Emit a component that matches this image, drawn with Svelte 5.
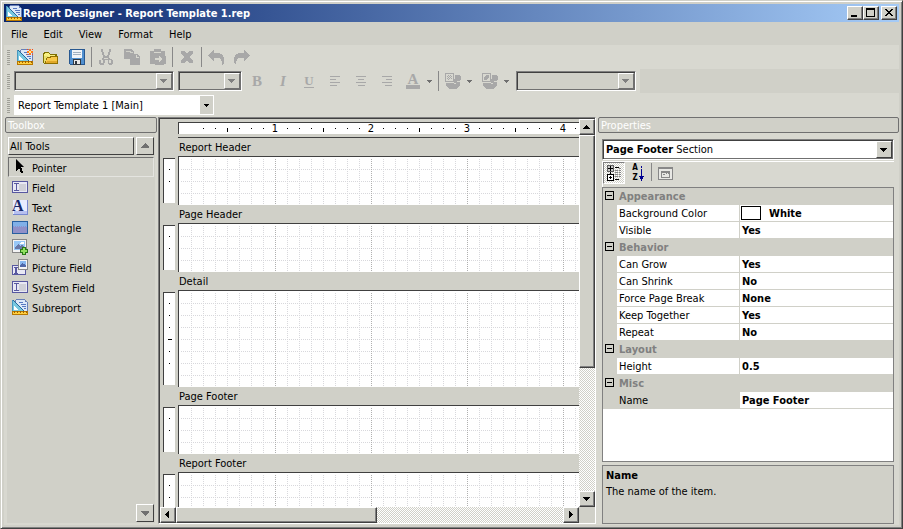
<script>
  const menus = ['File', 'Edit', 'View', 'Format', 'Help'];

  const mainTools = [
    { name: 'new', label: 'New' },
    { name: 'open', label: 'Open' },
    { name: 'save', label: 'Save' },
    null,
    { name: 'cut', label: 'Cut', disabled: true },
    { name: 'copy', label: 'Copy', disabled: true },
    { name: 'paste', label: 'Paste', disabled: true },
    null,
    { name: 'delete', label: 'Delete', disabled: true },
    null,
    { name: 'undo', label: 'Undo', disabled: true },
    { name: 'redo', label: 'Redo', disabled: true },
  ];

  const formatTools = [
    { name: 'bold', label: 'Bold' },
    { name: 'italic', label: 'Italic' },
    { name: 'underline', label: 'Underline' },
    { name: 'left', label: 'Align Left' },
    { name: 'center', label: 'Align Center' },
    { name: 'right', label: 'Align Right' },
    { name: 'fore', label: 'Font Color', drop: true },
    null,
    { name: 'fill', label: 'Fill Color', drop: true },
    { name: 'line', label: 'Line Color', drop: true },
  ];

  const tools = [
    { name: 'pointer', label: 'Pointer' },
    { name: 'field', label: 'Field' },
    { name: 'text', label: 'Text' },
    { name: 'rectangle', label: 'Rectangle' },
    { name: 'picture', label: 'Picture' },
    { name: 'picturefield', label: 'Picture Field' },
    { name: 'field', label: 'System Field' },
    { name: 'report', label: 'Subreport' },
  ];
  let activeTool = $state('Pointer');

  // 96 units per inch, snapped to eighths
  const GRID = 12;
  const sections = [
    { name: 'Report Header', height: 48 },
    { name: 'Page Header', height: 48 },
    { name: 'Detail', height: 96 },
    { name: 'Page Footer', height: 48 },
    { name: 'Report Footer', height: 48 },
  ];

  let rulerWidth = $state(0);
  // the first eighth carries no mark
  let rulerMarks = $derived(
    Array.from({ length: Math.max(0, Math.floor((rulerWidth - 5) / GRID) - 1) }, (_, i) => i + 2)
  );

  function sideMarks(height) {
    const count = height / GRID - 2;
    return Array.from({ length: count }, (_, i) => i + 1);
  }

  const groups = [
    {
      name: 'Appearance',
      props: [
        { name: 'Background Color', value: 'White', swatch: true },
        { name: 'Visible', value: 'Yes' },
      ],
    },
    {
      name: 'Behavior',
      props: [
        { name: 'Can Grow', value: 'Yes' },
        { name: 'Can Shrink', value: 'No' },
        { name: 'Force Page Break', value: 'None' },
        { name: 'Keep Together', value: 'Yes' },
        { name: 'Repeat', value: 'No' },
      ],
    },
    { name: 'Layout', props: [{ name: 'Height', value: '0.5' }] },
    { name: 'Misc', props: [{ name: 'Name', value: 'Page Footer', edit: true }] },
  ];
  let closed = $state({});
</script>

{#snippet reportArt()}
  <path d="M4 1h9l2 2v9H4z" fill="#dce8f8" />
  <path d="M4 0h9v1H4zM3 1h1v10H3zM13 1h1v1h1v1h-2zM15 3h1v9h-1z" fill="#6880b8" />
  <path d="M7 3h4v1H7zM9 5h5v1H9zM10 7h4v1h-4zM12 9h2v1h-2z" fill="#5878c0" />
  <path d="M0 1l11 11H0z" fill="#78c8e0" />
  <path d="M2 6l4 5H2z" fill="#fff" />
  <path d="M1 1l11 11" stroke="#286898" fill="none" />
  <path d="M0 1h1v11H0z" fill="#4898c0" />
  <path d="M0 12h16v4H0z" fill="#b87800" />
  <path d="M1 13h14v2H1z" fill="#ffd040" />
  <path d="M2 12h1v2H2zM5 12h1v2H5zM8 12h1v2H8zM11 12h1v2h-1zM14 12h1v2h-1z" fill="#a06000" />
{/snippet}

{#snippet palette()}
  <path d="M10 2h4l2 2v3l-2 1h-2v1h2l1 1v3l-3 2-1 1H5l-4-3v-3h8z" fill="#a8a8a8" />
  <path d="M0 0h9v9H0z" fill="#a8a8a8" />
  <path d="M1 1h7v7H1z" fill="#d8d8d0" />
  <path d="M9 10h2v1H9z" fill="#d8d8d0" />
{/snippet}

{#snippet icon(name)}
  <svg class="icon" width="16" height="16" viewBox="0 0 16 16" shape-rendering="crispEdges" aria-hidden="true">
    {#if name === 'report'}
      {@render reportArt()}
    {:else if name === 'new'}
      {@render reportArt()}
      <path d="M12 0h2v6h-2zM10 2h6v2h-6z" fill="#ff7820" />
      <path d="M12 2h2v2h-2z" fill="#fff080" />
      <path d="M10 0h1v1h-1zM15 0h1v1h-1zM10 5h1v1h-1zM15 5h1v1h-1z" fill="#f04820" />
    {:else if name === 'open'}
      <path d="M0 4l1-1h4l2 2h6l1 1v9H1l-1-1z" fill="#807000" />
      <path d="M1 5l1-1h3l2 2h5l1 2H1z" fill="#f8f080" />
      <path d="M1 7h4v7H1z" fill="#e8e070" />
      <path d="M3 9l1-1h2l1-1h8v7l-1 1H2z" fill="#907000" />
      <path d="M4 9h3l1-1h6v6H3z" fill="#f8c848" />
      <path d="M4 12h10v2H3z" fill="#e0a828" />
    {:else if name === 'save'}
      <path d="M0 1h1V0h14l1 1v14l-1 1H1l-1-1z" fill="#285890" />
      <path d="M1 1h14v14H1z" fill="#5090d0" />
      <path d="M3 1h10v8H3z" fill="#f0f4f8" />
      <path d="M4 3h8v1H4zM4 5h8v1H4z" fill="#a0b0c0" />
      <path d="M4 10h8v6H4z" fill="#303840" />
      <path d="M5 11h6v4H5z" fill="#e8e8e8" />
      <path d="M6 12h2v3H6z" fill="#303840" />
    {:else if name === 'cut'}
      <g fill="#a8a8a8">
        <path d="M3 0h2v3h1v3h1v3H5V6H4V3H3zM11 0h2v3h-1v3h-1v3H9V6h1V3h1z" />
        <path d="M6 7h4v3H6zM4 9h4v2H7v3H6v2H2v-1H1v-4h3zM5 11H3v3h2zM8 9h4v1h2v1h1v4h-1v1h-3v-1h-1v-4H8zM13 11h-2v3h2z" fill-rule="evenodd" />
      </g>
    {:else if name === 'copy'}
      <path d="M0 0h7l3 3v7H0z" fill="#a8a8a8" />
      <path d="M2 2h4v1H2zM6 2h1v1h2v1H6z" fill="#d0d0c8" />
      <path d="M6 5h7l3 3v8H6z" fill="#a8a8a8" />
      <path d="M12 6h1v2h2v1h-3z" fill="#d8d8d0" />
    {:else if name === 'paste'}
      <path d="M0 2h4V0h7v2h4v5h1v8h-2v1H5v-1H0z" fill="#a8a8a8" />
      <path d="M4 3h7v1H4zM5 9h4V7l4 3-4 3v-2H5z" fill="#d8d8d0" />
    {:else if name === 'delete'}
      <path d="M2 2h4v1h1v1h2V3h1V2h4v3h-1v1h-1v1h-1v2h1v1h1v1h1v3h-4v-1H9v-1H7v1H6v1H2v-3h1v-1h1V9h1V7H4V6H3V5H2z" fill="#a8a8a8" />
    {:else if name === 'undo'}
      <path d="M0 6l6-5v3h4q5 1 6 5v5l-2 2v-3q-1-4-4-4H6v4z" fill="#a8a8a8" />
    {:else if name === 'redo'}
      <path d="M16 6l-6-5v3H6Q1 5 0 9v5l2 2v-3q1-4 4-4h4v4z" fill="#a8a8a8" />
    {:else if name === 'left'}
      <path d="M3 3h10v1H3zM3 6h6v1H3zM3 9h10v1H3zM3 12h7v1H3z" fill="#a8a8a8" />
    {:else if name === 'center'}
      <path d="M3 3h10v1H3zM5 6h6v1H5zM3 9h10v1H3zM5 12h7v1H5z" fill="#a8a8a8" />
    {:else if name === 'right'}
      <path d="M3 3h10v1H3zM7 6h6v1H7zM3 9h10v1H3zM6 12h7v1H6z" fill="#a8a8a8" />
    {:else if name === 'fill'}
      {@render palette()}
      <path d="M2 3h1v1H2zM4 3h1v1H4zM6 3h1v1H6zM3 2h1v1H3zM5 2h1v1H5zM3 4h1v1H3zM5 4h1v1H5zM2 5h1v1H2zM4 5h1v1H4zM3 6h1v1H3zM6 5h1v1H6z" fill="#a8a8a8" />
    {:else if name === 'line'}
      {@render palette()}
      <path d="M2 7V5l2-3h3v2L5 7z" fill="#a8a8a8" />
    {:else if name === 'pointer'}
      <path d="M4 0v12l3-3 2 5h2v-1L9 8h4z" fill="#000" />
      <path d="M4 0l8 8" stroke="#606060" fill="none" />
    {:else if name === 'field'}
      <path d="M0 2h16v12H0z" fill="#5858a0" />
      <path d="M1 3h14v10H1z" fill="#e8e8f4" />
      <path d="M7 5h7v7H7z" fill="#d0d0d8" />
      <path d="M2 4h5v1H5v6h2v1H2v-1h2V5H2z" fill="#5858a0" />
    {:else if name === 'text'}
      <path d="M1 1h15v15H1z" fill="#7888d0" />
      <path d="M1 1h14v14H1z" fill="#e8ecff" />
      <path d="M2 12h13v3H2z" fill="#b8c0f0" />
    {:else if name === 'rectangle'}
      <path d="M0 2h16v13H0z" fill="#2860a0" />
      <path d="M1 3h14v5H1z" fill="#80b0e8" />
      <path d="M1 8h14v6H1z" fill="#9090c8" />
      <path d="M1 7h1v1H1zM3 7h1v1H3zM5 7h1v1H5zM7 7h1v1H7zM9 7h1v1H9zM11 7h1v1h-1zM13 7h1v1h-1z" fill="#9090c8" />
    {:else if name === 'picture'}
      <path d="M0 0h15v14H0z" fill="#888" />
      <path d="M1 1h13v12H1z" fill="#f4f4f4" />
      <path d="M2 2h11v9H2z" fill="#98c8f8" />
      <path d="M3 10V8l3-3 2 2 2-1 2 2v2z" fill="#6878a8" />
      <path d="M9 3h3v2H8V4h1z" fill="#fff" />
      <path d="M10 8h4v2h2v4h-2v2h-4v-2H8v-4h2z" fill="#287818" />
      <path d="M11 9h2v2h2v2h-2v2h-2v-2H9v-2h2z" fill="#90e060" />
    {:else if name === 'picturefield'}
      <path d="M0 6h14v10H0z" fill="#5858a0" />
      <path d="M1 7h12v8H1z" fill="#e8e8f4" />
      <path d="M2 8h4v1H5v5h1v1H2v-1h1V9H2z" fill="#5858a0" />
      <path d="M6 0h10v11H6z" fill="#888" />
      <path d="M7 1h8v9H7z" fill="#f4f4f4" />
      <path d="M8 2h6v6H8z" fill="#88b8f0" />
      <path d="M8 7l2-3 2 1 2 2v1H8z" fill="#5068a8" />
    {:else if name === 'category'}
      <path d="M1 0h7v7H1z" fill="#606060" />
      <path d="M2 1h5v5H2z" fill="#c8c8c8" />
      <path d="M4 1h1v5H4zM2 3h5v1H2zM4 7h1v2H4z" fill="#000" />
      <path d="M1 9h7v7H1z" fill="#000" />
      <path d="M2 10h5v5H2z" fill="#fff" />
      <path d="M4 11h1v3H4zM3 12h3v1H3zM9 2h4v1H9zM9 14h4v1H9z" fill="#000" />
      <path d="M9 5h3v1H9zM13 5h2v1h-2zM9 7h3v1H9zM13 7h2v1h-2zM9 9h3v1H9zM13 9h2v1h-2zM9 11h3v1H9zM13 11h2v1h-2zM13 3h2v1h-2z" fill="#888" />
    {:else if name === 'pages'}
      <path d="M0 2h15v13H0z" fill="#888" />
      <path d="M1 4h13v10H1z" fill="#e8e8e4" />
      <path d="M3 6h9v7H3z" fill="#888" />
      <path d="M4 8h7v4H4z" fill="#e8e8e4" />
      <path d="M5 7h2v1H5zM8 8h1v1H8zM10 8h1v1h-1zM5 9h2v1H5z" fill="#888" />
    {/if}
  </svg>
{/snippet}

{#snippet arrow(dir)}
  <svg class="arrow" width="8" height="8" viewBox="0 0 8 8" shape-rendering="crispEdges" aria-hidden="true">
    {#if dir === 'up'}
      <path d="M3 2h1v1H3zM2 3h3v1H2zM1 4h5v1H1zM0 5h7v1H0z" />
    {:else if dir === 'bigup'}
      <path d="M4 1h1v1H4zM3 2h3v1H3zM2 3h5v1H2zM1 4h7v1H1zM0 5h8v1H0z" />
    {:else if dir === 'bigdown'}
      <path d="M0 2h8v1H0zM1 3h7v1H1zM2 4h5v1H2zM3 5h3v1H3zM4 6h1v1H4z" />
    {:else if dir === 'down'}
      <path d="M0 2h7v1H0zM1 3h5v1H1zM2 4h3v1H2zM3 5h1v1H3z" />
    {:else if dir === 'left'}
      <path d="M5 0v7H4V6H3V5H2V4H1V3h1V2h1V1h1V0z" />
    {:else if dir === 'right'}
      <path d="M2 0v7h1V6h1V5h1V4h1V3H5V2H4V1H3V0z" />
    {:else}
      <path d="M1 3h5v1H1zM2 4h3v1H2zM3 5h1v1H3z" />
    {/if}
  </svg>
{/snippet}

<div class="window">
  <header class="titlebar">
    {@render icon('report')}
    <h1>Report Designer - Report Template 1.rep</h1>
    <div class="winbuttons">
      <button aria-label="Minimize">
        <svg width="12" height="10" viewBox="0 0 12 10" shape-rendering="crispEdges"><path d="M2 7h6v2H2z" /></svg>
      </button>
      <button aria-label="Maximize">
        <svg width="12" height="10" viewBox="0 0 12 10" shape-rendering="crispEdges"><path d="M1 0h9v9H1zM2 2v6h7V2z" fill-rule="evenodd" /></svg>
      </button>
      <button class="close" aria-label="Close">
        <svg width="12" height="10" viewBox="0 0 12 10" shape-rendering="crispEdges"><path d="M2 1h2v1h1v1h2V2h1V1h2v1H9v1H8v1H7v1h1v1h1v1h1v1H8V7H7V6H5v1H4v1H2V7h1V6h1V5h1V4H4V3H3V2H2z" /></svg>
      </button>
    </div>
  </header>

  <nav class="menubar">
    {#each menus as menu}
      <button>{menu}</button>
    {/each}
  </nav>

  <div class="toolbar">
    <span class="grip"></span>
    {#each mainTools as tool}
      {#if tool}
        <button class="tool" aria-label={tool.label} disabled={tool.disabled}>{@render icon(tool.name)}</button>
      {:else}
        <span class="sep"></span>
      {/if}
    {/each}
  </div>

  <div class="toolbar-line">
    <div class="toolbar">
      <span class="grip"></span>
      <div class="combo sunken font-name">
        <select aria-label="Font" disabled></select>
        <span class="drop">{@render arrow('down')}</span>
      </div>
      <div class="combo sunken font-size">
        <select aria-label="Font size" disabled></select>
        <span class="drop">{@render arrow('down')}</span>
      </div>
      {#each formatTools as tool}
        {#if !tool}
          <span class="sep"></span>
        {:else}
          <button class="tool" class:split={tool.drop} aria-label={tool.label} disabled>
            {#if tool.name === 'bold'}
              <b class="glyph">B</b>
            {:else if tool.name === 'italic'}
              <b class="glyph"><i>I</i></b>
            {:else if tool.name === 'underline'}
              <b class="glyph under">U</b>
            {:else if tool.name === 'fore'}
              <b class="glyph fore">A</b>
            {:else}
              {@render icon(tool.name)}
            {/if}
            {#if tool.drop}{@render arrow('small')}{/if}
          </button>
        {/if}
      {/each}
      <div class="combo sunken style-name">
        <select aria-label="Style" disabled></select>
        <span class="drop">{@render arrow('down')}</span>
      </div>
    </div>
  </div>

  <div class="toolbar">
    <span class="grip"></span>
    <div class="combo flat">
      <select aria-label="Report">
        <option>Report Template 1 [Main]</option>
      </select>
      <span class="drop">{@render arrow('small')}</span>
    </div>
  </div>

  <main>
    <aside class="toolbox">
      <h2>Toolbox</h2>
      <div class="toolbox-body">
        <div class="toolbox-head">
          <button class="raised all">All Tools</button>
          <button class="raised scroll" aria-label="Scroll up">{@render arrow('bigup')}</button>
        </div>
        <ul>
          {#each tools as tool}
            <li>
              <button
                class="item"
                class:active={activeTool === tool.label}
                aria-pressed={activeTool === tool.label}
                onclick={() => (activeTool = tool.label)}
              >
                <span class="item-icon">
                  {@render icon(tool.name)}
                  {#if tool.name === 'text'}<b class="letter" aria-hidden="true">A</b>{/if}
                </span>
                <span class="item-label">{tool.label}</span>
              </button>
            </li>
          {/each}
        </ul>
        <button class="raised scroll last" aria-label="Scroll down">{@render arrow('bigdown')}</button>
      </div>
    </aside>

    <section class="designer" aria-label="Report layout">
      <div class="surface">
        <div class="ruler-row" bind:clientWidth={rulerWidth}>
          <svg class="ruler" shape-rendering="crispEdges">
            {#each rulerMarks as n}
              {#if n % 8 === 0}
                <text x={n * GRID} y="9" text-anchor="middle">{n / 8}</text>
              {:else}
                <rect x={n * GRID} y="5" width="1" height={n % 4 === 0 ? 4 : 1} />
              {/if}
            {/each}
          </svg>
        </div>
        {#each sections as section, s}
          <div class="section">
            <h3>{section.name}</h3>
            <div class="band">
              <svg class="side" style:height="{section.height - 3}px" shape-rendering="crispEdges" aria-hidden="true">
                {#each sideMarks(section.height) as n}
                  <rect x={n % 4 === 0 ? 4 : 5} y={n * GRID - 2} width={n % 4 === 0 ? 4 : 1} height="1" />
                {/each}
              </svg>
              <svg class="canvas" style:height="{section.height + 1}px" shape-rendering="crispEdges">
                <defs>
                  <pattern id="grid{s}" width="96" height="12" patternUnits="userSpaceOnUse">
                    {#each [1, 2, 3, 4, 5, 6, 7] as n}
                      <path class="dots" d="M{n * GRID}.5 0v12" />
                    {/each}
                    <path class="dots" d="M0 .5h96" />
                    <path class="dots inch" d="M.5 0v12" />
                  </pattern>
                </defs>
                <rect x="1" y="1" width="100%" height="100%" fill="url(#grid{s})" />
              </svg>
            </div>
          </div>
        {/each}
      </div>
      <div class="scrollbar vertical">
        <button class="raised" aria-label="Up">{@render arrow('up')}</button>
        <div class="raised thumb"></div>
        <div class="track"></div>
        <button class="raised" aria-label="Down">{@render arrow('down')}</button>
      </div>
      <div class="scrollbar horizontal">
        <button class="raised" aria-label="Left">{@render arrow('left')}</button>
        <div class="raised thumb"></div>
        <div class="track"></div>
        <button class="raised" aria-label="Right">{@render arrow('right')}</button>
      </div>
    </section>

    <aside class="properties">
      <h2>Properties</h2>
      <div class="properties-body">
        <div class="combo sunken object">
          <select aria-label="Object">
            <option>Page Footer Section</option>
          </select>
          <span class="object-name" aria-hidden="true"><b>Page Footer</b> Section</span>
          <span class="drop">{@render arrow('down')}</span>
        </div>
        <div class="prop-tools">
          <button class="pressed" aria-label="Categorized">{@render icon('category')}</button>
          <button class="az" aria-label="Alphabetic">
            <span class="az-text"><b>A</b><b>Z</b></span>
            <svg width="5" height="15" viewBox="0 0 5 15" shape-rendering="crispEdges"><path d="M2 0h1v2H2zM2 3h1v7h2v1H4v2H3v2H2v-2H1v-2H0v-1h2z" fill="#000090" /></svg>
          </button>
          <span class="sep"></span>
          <button class="pages" aria-label="Property Pages" disabled>{@render icon('pages')}</button>
        </div>
        <div class="grid">
          <table>
            <colgroup>
              <col class="col-gutter" />
              <col class="col-name" />
              <col />
            </colgroup>
            <tbody>
              {#each groups as group}
                <tr class="group">
                  <td class="gutter">
                    <button
                      class="toggle"
                      class:closed={closed[group.name]}
                      aria-label="Toggle {group.name}"
                      onclick={() => (closed[group.name] = !closed[group.name])}
                    ></button>
                  </td>
                  <th colspan="2">{group.name}</th>
                </tr>
                {#if !closed[group.name]}
                  {#each group.props as prop}
                    <tr class:selected={prop.edit}>
                      <td class="gutter"></td>
                      <th scope="row">{prop.name}</th>
                      <td class="value">
                        {#if prop.edit}
                          <input aria-label={prop.name} value={prop.value} />
                        {:else}
                          {#if prop.swatch}<span class="swatch"></span>{/if}{prop.value}
                        {/if}
                      </td>
                    </tr>
                  {/each}
                {/if}
              {/each}
            </tbody>
          </table>
        </div>
        <div class="help">
          <b>Name</b>
          <p>The name of the item.</p>
        </div>
      </div>
    </aside>
  </main>
</div>

<style>
  :global(body) {
    margin: 0;
    background: #d0d0c8;
  }
  .window {
    box-sizing: border-box;
    height: 100vh;
    display: flex;
    flex-direction: column;
    border: 1px solid;
    border-color: #d0d0c8 #404040 #404040 #d0d0c8;
    box-shadow: inset 1px 1px #fff, inset -1px -1px #808080;
    padding: 3px;
    background: #d0d0c8;
    color: #000;
    font: 11px/13px 'DejaVu Sans Condensed', 'DejaVu Sans', sans-serif;
    cursor: default;
  }
  button, select, input {
    font: inherit;
    color: inherit;
    margin: 0;
    padding: 0;
    border: 0;
    border-radius: 0;
    background: none;
  }
  h1, h2, h3, p, ul {
    margin: 0;
    padding: 0;
    font-size: 11px;
    font-weight: 400;
    list-style: none;
  }
  .icon, .arrow { display: block; flex-shrink: 0; }

  .titlebar {
    display: flex;
    align-items: center;
    height: 18px;
    flex-shrink: 0;
    padding: 0 2px;
    background: linear-gradient(90deg, #08246b, #a5cbf7);
    color: #fff;
  }
  .titlebar h1 {
    flex: 1;
    padding-left: 1px;
    font-weight: 700;
    white-space: nowrap;
  }
  .winbuttons { display: flex; }
  .winbuttons button, .raised {
    box-sizing: border-box;
    display: flex;
    align-items: center;
    justify-content: center;
    background: #d0d0c8;
    border: 1px solid;
    border-color: #fff #404040 #404040 #fff;
    box-shadow: inset -1px -1px #808080;
  }
  .winbuttons button { width: 16px; height: 14px; }
  .winbuttons .close { margin-left: 2px; }

  .menubar {
    display: flex;
    height: 23px;
    flex-shrink: 0;
  }
  .menubar button { padding: 2px 9px 0 7px; }

  .toolbar {
    display: flex;
    align-items: center;
    height: 24px;
    flex-shrink: 0;
    box-sizing: border-box;
    padding: 0 4px 0 3px;
    background: #d8d8d0;
  }
  .toolbar-line { display: flex; flex-shrink: 0; }
  .grip {
    width: 3px;
    height: 15px;
    margin-right: 2px;
    background: repeating-linear-gradient(#a0a098 0 1px, transparent 1px 2px);
  }
  .tool {
    width: 26px;
    height: 22px;
    display: flex;
    align-items: center;
    justify-content: center;
  }
  .tool.split {
    width: 37px;
    gap: 5px;
    padding-left: 2px;
  }
  .tool .arrow { fill: #707070; }
  .sep {
    width: 1px;
    height: 20px;
    margin: 0 1px;
    background: #888;
  }
  .glyph {
    color: #a8a8a8;
    font: 700 15px/16px 'Liberation Serif', serif;
  }
  .glyph.under {
    font-size: 13px;
    line-height: 12px;
    border-bottom: 1px solid #a8a8a8;
  }
  .glyph.fore {
    width: 14px;
    margin: 0 1px;
    line-height: 12px;
    border-bottom: 4px solid #a8a8a8;
  }

  .combo {
    box-sizing: border-box;
    display: grid;
    grid-template-columns: minmax(0, 1fr) auto;
    height: 20px;
  }
  .combo > select {
    grid-area: 1 / 1 / 2 / 3;
    appearance: none;
    outline: none;
    padding-left: 4px;
  }
  .drop {
    grid-area: 1 / 2;
    display: flex;
    align-items: center;
    justify-content: center;
    pointer-events: none;
    background: #d0d0c8;
  }
  .sunken {
    border: 1px solid;
    border-color: #808080 #fff #fff #808080;
    box-shadow: inset 1px 1px #404040, inset -1px -1px #707070;
    background: #d0d0c8;
    padding: 1px;
  }
  .sunken .drop {
    width: 14px;
    border: 1px solid;
    border-color: #fff #707070 #707070 #fff;
    fill: #808080;
  }
  .font-name { width: 160px; margin: 0 4px 0 2px; }
  .font-size { width: 64px; margin-right: 2px; }
  .style-name { width: 120px; margin-left: 2px; }
  .flat { width: 200px; margin-left: 2px; background: #fff; }
  .flat .drop { width: 13px; margin: 1px; }

  main {
    flex: 1;
    min-height: 0;
    display: flex;
    background: #d8d8d0;
  }
  h2 {
    height: 14px;
    line-height: 15px;
    padding: 0 2px;
    border: 1px solid #707070;
    border-radius: 2px;
    background: #d0d0c8;
    color: #fff;
  }
  .toolbox {
    width: 152px;
    flex-shrink: 0;
    margin-left: 1px;
    display: flex;
    flex-direction: column;
  }
  .toolbox-body {
    flex: 1;
    min-height: 0;
    display: flex;
    flex-direction: column;
    margin: 0 2px 2px;
    padding: 4px 1px 1px;
    background: #d0d0c8;
  }
  .toolbox-head { display: flex; gap: 2px; margin-bottom: 2px; }
  .toolbox .raised { box-shadow: none; }
  .all { flex: 1; justify-content: flex-start; padding-left: 1px; }
  .scroll { width: 18px; height: 18px; fill: #707070; }
  .last { margin: auto 0 0 auto; }
  .item {
    box-sizing: border-box;
    width: 100%;
    height: 20px;
    display: flex;
    align-items: center;
    gap: 4px;
    padding-left: 3px;
    border: 1px solid transparent;
    text-align: left;
  }
  .item.active { border-color: #707070 #e4e4e0 #e4e4e0 #707070; }
  .item-label { padding-top: 2px; }
  .item-icon { display: grid; }
  .item-icon > :global(*) { grid-area: 1 / 1; }
  .letter {
    color: #182868;
    font: 700 16px/14px 'Liberation Serif', serif;
  }

  .designer {
    box-sizing: border-box;
    flex: 1;
    min-width: 0;
    display: grid;
    grid-template: minmax(0, 1fr) 16px / minmax(0, 1fr) 16px;
    margin: 0 2px 1px 1px;
    border: 1px solid;
    border-color: #808080 #fff #fff #808080;
    box-shadow: inset 1px 1px #404040;
    padding: 1px 0 0 1px;
    background: #d0d0c8;
  }
  .surface {
    overflow: hidden;
    padding: 3px 0 0 3px;
  }
  .ruler-row {
    margin-left: 15px;
    height: 15px;
    border-bottom: 1px solid #404040;
  }
  .ruler {
    box-sizing: border-box;
    display: block;
    width: 100%;
    height: 12px;
    overflow: visible;
    background: #fff;
    border: solid #404040;
    border-width: 1px 0 0 1px;
  }
  .ruler text { font-size: 11px; }
  .section h3 {
    height: 18px;
    line-height: 19px;
    padding-left: 16px;
  }
  .band { display: flex; gap: 3px; }
  .side, .canvas {
    box-sizing: border-box;
    background: #fff;
    border: solid #404040;
    border-width: 1px 0 0 1px;
  }
  .side {
    width: 12px;
    margin-top: 2px;
    flex-shrink: 0;
  }
  .canvas { flex: 1; min-width: 0; }
  .dots { stroke: #d8d8dc; stroke-dasharray: 1 1; }
  .inch { stroke: #b0b0b0; }

  .scrollbar { display: flex; }
  .scrollbar button { width: 16px; height: 16px; flex-shrink: 0; }
  .vertical { flex-direction: column; }
  .track {
    flex: 1;
    background: repeating-conic-gradient(#d0d0c8 0 25%, #fff 0 50%) 0 0 / 2px 2px;
  }
  .vertical .thumb { height: 60%; }
  .horizontal .thumb { width: 48%; }

  .properties {
    width: 301px;
    flex-shrink: 0;
    display: flex;
    flex-direction: column;
  }
  .properties-body {
    flex: 1;
    min-height: 0;
    display: flex;
    flex-direction: column;
    padding: 6px 5px 1px 4px;
  }
  .object { background: #fff; height: 21px; }
  .object select { color: transparent; }
  .object option { color: #000; }
  .object-name {
    grid-area: 1 / 1;
    align-self: center;
    padding-left: 2px;
    pointer-events: none;
  }
  .object .drop { fill: #000; border-color: #fff #404040 #404040 #fff; }
  .prop-tools {
    box-sizing: border-box;
    height: 26px;
    flex-shrink: 0;
    display: flex;
    align-items: flex-start;
    margin-top: 1px;
    border: solid #fff;
    border-width: 1px 0 0 1px;
  }
  .prop-tools button {
    box-sizing: border-box;
    width: 22px;
    height: 22px;
    display: flex;
    align-items: center;
    justify-content: center;
  }
  .prop-tools .sep { margin: 1px 3px 0 2px; height: 18px; }
  .prop-tools .pressed {
    border: 1px solid;
    border-color: #808080 #fff #fff #808080;
    background: repeating-conic-gradient(#d0d0c8 0 25%, #fff 0 50%) 0 0 / 2px 2px;
  }
  .prop-tools .az { width: 24px; gap: 1px; padding-left: 2px; }
  .az-text {
    display: flex;
    flex-direction: column;
    font-size: 8px;
    line-height: 10px;
  }

  .grid {
    flex: 1;
    min-height: 0;
    overflow: hidden;
    border: 1px solid #808080;
    background: #fff;
  }
  table {
    width: 100%;
    border-spacing: 0;
    table-layout: fixed;
  }
  .col-gutter { width: 14px; }
  .col-name { width: 122px; }
  td, th {
    box-sizing: border-box;
    height: 17px;
    padding: 1px 0 0 2px;
    font-weight: 400;
    text-align: left;
    line-height: 15px;
    border-bottom: 1px solid #d0d0c8;
    white-space: nowrap;
  }
  .gutter {
    background: #d0d0c8;
    vertical-align: top;
  }
  .group { background: #d0d0c8; }
  .group .gutter { padding-top: 3px; }
  .group th {
    color: #808080;
    font-weight: 700;
  }
  .selected th { background: #d0d0c8; }
  .value {
    font-weight: 700;
    border-left: 1px solid #d0d0c8;
  }
  .value input {
    display: block;
    width: 100%;
    height: 15px;
    outline: none;
  }
  .swatch {
    display: inline-block;
    width: 18px;
    height: 12px;
    margin: 0 8px 0 -1px;
    border: 1px solid #000;
    vertical-align: top;
  }
  .toggle {
    display: block;
    box-sizing: border-box;
    width: 9px;
    height: 9px;
    border: 1px solid #000;
    background: linear-gradient(#000, #000) center / 5px 1px no-repeat;
  }
  .toggle.closed {
    background: linear-gradient(#000, #000) center / 5px 1px no-repeat, linear-gradient(#000, #000) center / 1px 5px no-repeat;
  }
  .help {
    box-sizing: border-box;
    height: 59px;
    flex-shrink: 0;
    margin-top: 3px;
    padding: 3px;
    border: 1px solid #808080;
    background: #d0d0c8;
  }
  .help p { margin-top: 3px; }
</style>
